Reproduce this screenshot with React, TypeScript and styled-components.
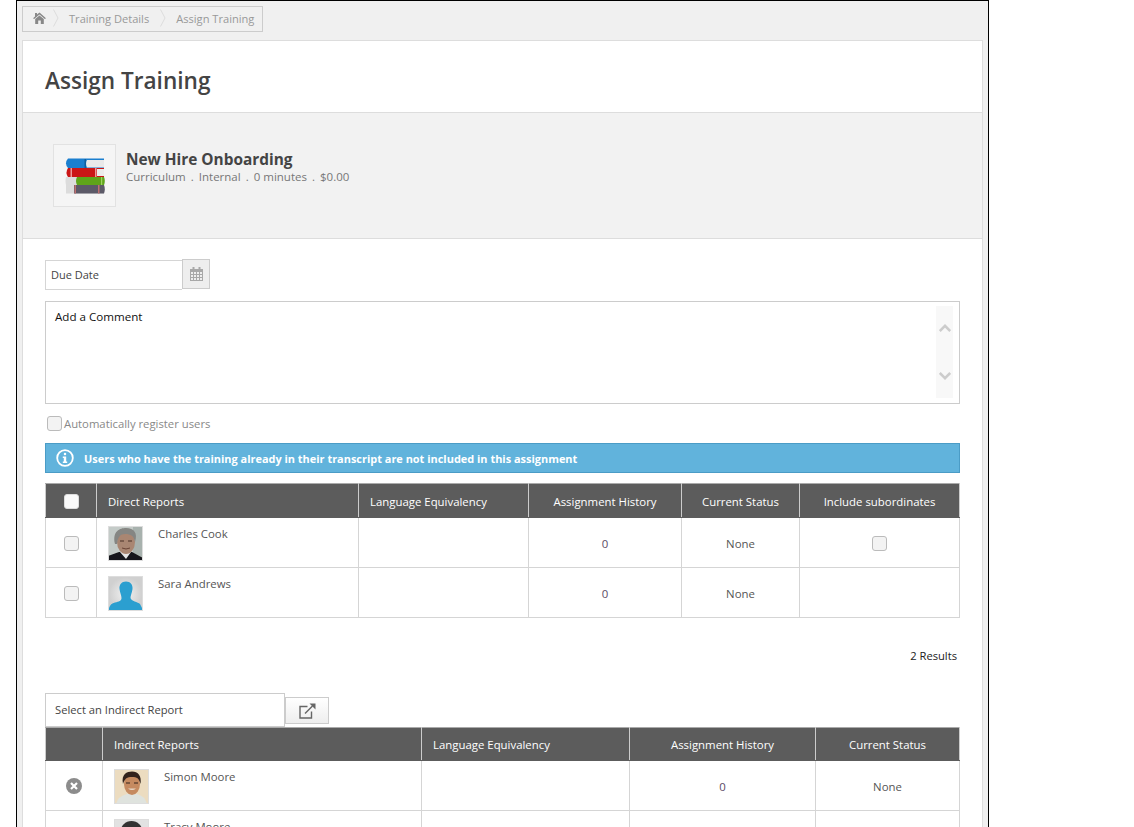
import React from 'react'
import styled, { createGlobalStyle } from 'styled-components'

const GlobalStyle = createGlobalStyle`
  html, body {
    margin: 0;
    padding: 0;
    height: 827px;
    overflow: hidden;
    background: #fff;
    font-family: "Open Sans", "Liberation Sans", sans-serif;
    font-size: 12px;
    color: #555;
  }
`

const Frame = styled.div`
  width: 973px;
  margin-left: 16px;
  box-sizing: border-box;
  height: 827px;
  overflow: hidden;
  border: 1px solid #000;
  border-bottom: 0;
  background: #f0f0f0;
  padding: 5px 5px 0 5px;
`

const Breadcrumbs = styled.div`
  display: inline-flex;
  align-items: center;
  height: 26px;
  box-sizing: border-box;
  border: 1px solid #ccc;
  padding: 0 8px 2px 10px;
  color: #999;
  font-size: 11.1px;
  vertical-align: top;
`

const Crumb = styled.span`
  margin-left: 10px;
`

const HomeWrap = styled.span`
  display: flex;
  margin-right: -4px;
`

const ChevronMark = styled.svg`
  margin-left: 11px;
`

const Card = styled.div`
  margin-top: 8px;
  background: #fff;
  border: 1px solid #ddd;
  width: 961px;
  box-sizing: border-box;
  height: 900px;
`

const TitleBar = styled.div`
  height: 72px;
  box-sizing: border-box;
  padding: 23px 0 0 22px;
  border-bottom: 1px solid #ddd;
`

const Title = styled.h1`
  margin: 0;
  font-size: 22.6px;
  line-height: 34px;
  font-weight: 600;
  color: #444;
`

const Summary = styled.div`
  height: 126px;
  box-sizing: border-box;
  background: #f2f2f2;
  border-bottom: 1px solid #ddd;
  padding: 31px 0 0 30px;
  display: flex;
  gap: 10px;
`

const Thumb = styled.div`
  width: 63px;
  height: 63px;
  box-sizing: border-box;
  background: #f5f5f5;
  border: 1px solid #e2e2e2;
  display: flex;
  align-items: center;
  justify-content: center;
`

const SummaryText = styled.div`
  padding-top: 6px;
`

const CourseName = styled.div`
  font-size: 15.4px;
  line-height: 19px;
  font-weight: 700;
  color: #444;
`

const Meta = styled.div`
  display: flex;
  gap: 5px;
  font-size: 11.5px;
  line-height: 15px;
  color: #777;
`

const Body = styled.div`
  padding: 21px 22px 0 22px;
`

const DateRow = styled.div`
  display: flex;
  align-items: flex-start;
`

const DateInput = styled.div`
  width: 137px;
  height: 30px;
  box-sizing: border-box;
  border: 1px solid #d5d5d5;
  border-right: 0;
  padding-left: 5px;
  line-height: 28px;
  font-size: 11px;
  color: #444;
`

const DateButton = styled.div`
  width: 28px;
  height: 30px;
  margin-top: -1px;
  box-sizing: border-box;
  border: 1px solid #ccc;
  background: #eee;
  display: flex;
  align-items: center;
  justify-content: center;
`

const Comment = styled.div`
  position: relative;
  margin-top: 11px;
  height: 103px;
  box-sizing: border-box;
  border: 1px solid #ccc;
  padding: 7px 9px;
  font-size: 11.6px;
  line-height: 16px;
  color: #111;
`

const ScrollTrack = styled.div`
  position: absolute;
  top: 4px;
  right: 6px;
  bottom: 5px;
  width: 17px;
  background: #f8f8f8;
  display: flex;
  flex-direction: column;
  justify-content: space-between;
  align-items: center;
  padding: 18px 0 18px;
  box-sizing: border-box;
`

const AutoRow = styled.div`
  display: flex;
  align-items: center;
  gap: 2px;
  margin: 11px 0 12px 2px;
  height: 16px;
  font-size: 11.3px;
  color: #888;
`

const Check = styled.span<{ $white?: boolean }>`
  display: block;
  width: 15px;
  height: 15px;
  box-sizing: border-box;
  border: 1px solid ${(p) => (p.$white ? '#ddd' : '#bbb')};
  border-radius: 3px;
  background: ${(p) => (p.$white ? '#fafafa' : '#f3f3f3')};
`

const Notice = styled.div`
  height: 30px;
  box-sizing: border-box;
  background: #61b3dc;
  border: 1px solid #4b9cc6;
  display: flex;
  align-items: center;
  gap: 10px;
  padding: 0 0 0 10px;
  color: #fff;
  font-size: 10.95px;
  font-weight: 700;
`

const NoticeText = styled.span`
  padding-top: 1px;
`

const Table = styled.table<{ $top: number }>`
  width: 914px;
  margin-top: ${(p) => p.$top}px;
  border-collapse: collapse;
  table-layout: fixed;
  font-size: 11.4px;
`

const Head = styled.th<{ $left?: boolean; $tall?: boolean }>`
  height: ${(p) => (p.$tall ? 34 : 33)}px;
  padding: ${(p) => (p.$left ? '1px 11px 0' : '1px 0 0')};
  box-sizing: border-box;
  background: #5c5c5c;
  color: #fff;
  font-weight: 400;
  text-align: ${(p) => (p.$left ? 'left' : 'center')};
  border: 1px solid #ccc;
  border-top-color: #aaa;
  border-bottom-color: #5c5c5c;
`

const Cell = styled.td`
  height: 50px;
  padding: 1px 0 0;
  box-sizing: border-box;
  text-align: center;
  color: #555;
  border: 1px solid #d5d5d5;
`

const Count = styled.span`
  color: #5c4a66;
`

const CenterBox = styled.div`
  display: flex;
  justify-content: center;
`

const Person = styled.div`
  display: flex;
  align-items: flex-start;
  height: 48px;
  box-sizing: border-box;
  padding: 7px 0 0 11px;
  text-align: left;
`

const Avatar = styled.div`
  width: 35px;
  height: 35px;
  flex: none;
  box-sizing: border-box;
  border: 1px solid #ddd;
  overflow: hidden;
  margin-right: 15px;
  svg {
    display: block;
  }
`

const PersonName = styled.span`
  color: #555;
  line-height: 16px;
`

const Results = styled.div`
  margin-top: 30px;
  height: 16px;
  line-height: 16px;
  text-align: right;
  padding-right: 3px;
  font-size: 11.2px;
  color: #222;
`

const PickerRow = styled.div`
  display: flex;
  align-items: center;
  margin-top: 29px;
  height: 34px;
`

const PickerInput = styled.div`
  width: 240px;
  height: 34px;
  box-sizing: border-box;
  border: 1px solid #ccc;
  padding-left: 9px;
  line-height: 32px;
  font-size: 11.2px;
  color: #444;
`

const PickerButton = styled.div`
  width: 44px;
  height: 27px;
  box-sizing: border-box;
  border: 1px solid #ccc;
  background: linear-gradient(#fff, #eee);
  margin-top: 1px;
  display: flex;
  align-items: center;
  justify-content: center;
`

const Remove = styled.div`
  display: flex;
  justify-content: center;
`

const HomeIcon = () => (
  <svg width="13" height="12" viewBox="0 0 13 12">
    <path d="M6.5 0.5 L13 6.2 L11.8 7 L6.5 2.6 L1.2 7 L0 6.2 L2 4.4 V1 H4 V2.6 Z" fill="#888" />
    <path d="M2.2 7 L6.5 3.5 L10.8 7 V12 H7.8 V8.4 H5.2 V12 H2.2 Z" fill="#888" />
  </svg>
)

const Chevron = () => (
  <ChevronMark width="6" height="18" viewBox="0 0 6 18">
    <path d="M0.5 0.5 L5 9 L0.5 17.5" fill="none" stroke="#dcdcdc" />
  </ChevronMark>
)

const Books = () => (
  <svg width="40" height="36" viewBox="0 0 40 36">
    <path d="M3 0.5 H39 V10 H3 Q-1 5 3 0.5 Z" fill="#1b7fcf" />
    <path d="M22 2 H39 V9.5 H22 Q20 5.5 22 2 Z" fill="#e9e9e9" />
    <rect x="19.5" y="1" width="1.5" height="9" fill="#0f5f9f" />
    <path d="M3 10 H39 V19 H3 Q0 14.5 3 10 Z" fill="#cb1616" />
    <path d="M32 11 H39 V18 H32 Z" fill="#ececec" />
    <rect x="5.5" y="10" width="1.5" height="9" fill="#eb9a9a" />
    <rect x="30" y="10" width="1.5" height="9" fill="#eb9a9a" />
    <path d="M1 19 H39 Q40.5 23 39 27 H1 Q0 23 1 19 Z" fill="#dcdcdc" />
    <path d="M12 19 H39 Q40.5 23 39 27 H12 Q10 23 12 19 Z" fill="#5fa51a" />
    <rect x="36" y="19" width="1.2" height="8" fill="#9fd25f" />
    <path d="M1 27 H39 Q40.5 31 39 35.5 H1 Z" fill="#dcdcdc" />
    <path d="M9 27 H39 Q40.5 31 39 35.5 H9 Z" fill="#5c5a68" />
    <rect x="9.5" y="27" width="1.5" height="8.5" fill="#c07070" />
    <rect x="33" y="27" width="1.5" height="8.5" fill="#c07070" />
  </svg>
)

const CalendarIcon = () => (
  <svg width="13" height="14" viewBox="0 0 13 14">
    <path
      d="M0 2 H13 V14 H0 Z M1 5 V7 H3 V5 Z M4 5 V7 H6 V5 Z M7 5 V7 H9 V5 Z M10 5 V7 H12 V5 Z M1 8 V10 H3 V8 Z M4 8 V10 H6 V8 Z M7 8 V10 H9 V8 Z M10 8 V10 H12 V8 Z M1 11 V13 H3 V11 Z M4 11 V13 H6 V11 Z M7 11 V13 H9 V11 Z M10 11 V13 H12 V11 Z"
      fill="#a8a8a8"
      fillRule="evenodd"
    />
    <rect x="2.5" y="0" width="2" height="3.5" fill="#a8a8a8" />
    <rect x="8.5" y="0" width="2" height="3.5" fill="#a8a8a8" />
  </svg>
)

const ScrollArrow = ({ up }: { up?: boolean }) => (
  <svg width="12" height="8" viewBox="0 0 12 8">
    <path d={up ? 'M0.8 7 L6 1.8 L11.2 7' : 'M0.8 1 L6 6.2 L11.2 1'} fill="none" stroke="#ccc" strokeWidth="2.5" />
  </svg>
)

const InfoIcon = () => (
  <svg width="18" height="18" viewBox="0 0 18 18">
    <circle cx="9" cy="9" r="7.8" fill="none" stroke="#fff" strokeWidth="1.8" />
    <rect x="7.8" y="3.8" width="2.4" height="2.4" rx="1" fill="#fff" />
    <path d="M6.8 7.5 H10.2 V12.5 H11.2 V14 H6.8 V12.5 H7.8 V9 H6.8 Z" fill="#fff" />
  </svg>
)

const PopoutIcon = () => (
  <svg width="17" height="16" viewBox="0 0 17 16">
    <path d="M8.5 3.5 H1 V15 H12.5 V8.5" fill="none" stroke="#666" strokeWidth="1.4" />
    <path d="M6 10.5 L13.5 3" fill="none" stroke="#666" strokeWidth="1.5" />
    <path d="M10.5 0.5 H16.5 V6.5 Z" fill="#666" />
  </svg>
)

const RemoveIcon = () => (
  <svg width="16" height="16" viewBox="0 0 16 16">
    <circle cx="8" cy="8" r="8" fill="#8c8c8c" />
    <path d="M5 5 L11 11 M11 5 L5 11" stroke="#fff" strokeWidth="2.2" />
  </svg>
)

const Soft = () => (
  <defs>
    <filter id="soft" x="-10%" y="-10%" width="120%" height="120%">
      <feGaussianBlur stdDeviation="0.7" />
    </filter>
  </defs>
)

const CharlesPhoto = () => (
  <svg width="33" height="33" viewBox="0 0 33 33">
    <Soft />
    <rect width="33" height="33" fill="#c4cbc8" />
    <rect x="24" width="9" height="33" fill="#a8b2ae" />
    <g filter="url(#soft)">
      <path d="M-1 34 V29 L10 25 H23 L34 31 V34 Z" fill="#15161a" />
      <path d="M11 25 L17 32 L22 25 Z" fill="#e6e6e6" />
      <ellipse cx="17" cy="15" rx="9" ry="12" fill="#a98672" />
      <path d="M6 17 C3 4 11 1 17 1 C25 1 29 6 26 15 C25 9 22 7 16 7 C11 7 9 10 8 17 Z" fill="#858683" />
      <path d="M11 14 H15 M19 14 H23" stroke="#4c3228" strokeWidth="1.2" />
      <path d="M13 21 Q17 23 21 21" stroke="#6a4436" strokeWidth="1" fill="none" />
    </g>
  </svg>
)

const SilhouettePhoto = () => (
  <svg width="33" height="33" viewBox="0 0 33 33">
    <defs>
      <radialGradient id="silhouetteBg">
        <stop offset="0" stopColor="#f2f2f2" />
        <stop offset="1" stopColor="#d0d0d0" />
      </radialGradient>
    </defs>
    <rect width="33" height="33" fill="url(#silhouetteBg)" />
    <path
      d="M17 4.5 C21.5 4.5 24 8 23.5 12 C23 16 21.5 18 21.5 21 C22 24 29 25 31 27 L33 31 V33 H0 V31 C1 28 3 26 6 25.5 C10 24.5 12.5 24 12.5 21 C12.5 18 11 16 10.5 12 C10 8 12.5 4.5 17 4.5 Z"
      fill="#2b9fd0"
    />
  </svg>
)

const SimonPhoto = () => (
  <svg width="33" height="33" viewBox="0 0 33 33">
    <Soft />
    <rect width="33" height="33" fill="#ecdcc0" />
    <g filter="url(#soft)">
      <path d="M1 34 Q3 26 12 24 H22 Q30 26 32 34 Z" fill="#dfe3de" />
      <ellipse cx="17" cy="14" rx="8" ry="11" fill="#c58a60" />
      <path d="M8 14 C6 4 12 1.5 17 1.5 C23 1.5 27 6 25.5 14 C24 8 22 7 17 7 C12 7 10 8 8 14 Z" fill="#33231c" />
      <path d="M11 13 H15 M19 13 H23" stroke="#33231c" strokeWidth="1.2" />
      <path d="M13 18.5 Q17 21.5 21 18.5 Z" fill="#e8d8c8" />
    </g>
  </svg>
)

const TracyPhoto = () => (
  <svg width="33" height="33" viewBox="0 0 33 33">
    <rect width="33" height="33" fill="#e2e2e2" />
    <ellipse cx="16.5" cy="12" rx="11" ry="11" fill="#333" />
  </svg>
)

const Direct = [
  { name: 'Charles Cook', photo: <CharlesPhoto />, sub: true },
  { name: 'Sara Andrews', photo: <SilhouettePhoto />, sub: false },
]

const Indirect = [
  { name: 'Simon Moore', photo: <SimonPhoto /> },
  { name: 'Tracy Moore', photo: <TracyPhoto /> },
]

const App = () => {
  return (
    <>
      <GlobalStyle />
      <Frame>
        <Breadcrumbs>
          <HomeWrap>
            <HomeIcon />
          </HomeWrap>
          <Chevron />
          <Crumb>Training Details</Crumb>
          <Chevron />
          <Crumb>Assign Training</Crumb>
        </Breadcrumbs>
        <Card>
          <TitleBar>
            <Title>Assign Training</Title>
          </TitleBar>
          <Summary>
            <Thumb>
              <Books />
            </Thumb>
            <SummaryText>
              <CourseName>New Hire Onboarding</CourseName>
              <Meta>
                <span>Curriculum</span>
                <span>.</span>
                <span>Internal</span>
                <span>.</span>
                <span>0 minutes</span>
                <span>.</span>
                <span>$0.00</span>
              </Meta>
            </SummaryText>
          </Summary>
          <Body>
            <DateRow>
              <DateInput>Due Date</DateInput>
              <DateButton>
                <CalendarIcon />
              </DateButton>
            </DateRow>
            <Comment>
              Add a Comment
              <ScrollTrack>
                <ScrollArrow up />
                <ScrollArrow />
              </ScrollTrack>
            </Comment>
            <AutoRow>
              <Check />
              Automatically register users
            </AutoRow>
            <Notice>
              <InfoIcon />
              <NoticeText>
                Users who have the training already in their transcript are not included in this assignment
              </NoticeText>
            </Notice>
            <Table $top={10}>
              <colgroup>
                <col width="51" />
                <col width="262" />
                <col width="170" />
                <col width="153" />
                <col width="118" />
                <col width="160" />
              </colgroup>
              <thead>
                <tr>
                  <Head $tall>
                    <CenterBox>
                      <Check $white />
                    </CenterBox>
                  </Head>
                  <Head $left>Direct Reports</Head>
                  <Head $left>Language Equivalency</Head>
                  <Head>Assignment History</Head>
                  <Head>Current Status</Head>
                  <Head>Include subordinates</Head>
                </tr>
              </thead>
              <tbody>
                {Direct.map((row) => (
                  <tr key={row.name}>
                    <Cell>
                      <CenterBox>
                        <Check />
                      </CenterBox>
                    </Cell>
                    <Cell>
                      <Person>
                        <Avatar>{row.photo}</Avatar>
                        <PersonName>{row.name}</PersonName>
                      </Person>
                    </Cell>
                    <Cell />
                    <Cell>
                      <Count>0</Count>
                    </Cell>
                    <Cell>None</Cell>
                    <Cell>
                      {row.sub && (
                        <CenterBox>
                          <Check />
                        </CenterBox>
                      )}
                    </Cell>
                  </tr>
                ))}
              </tbody>
            </Table>
            <Results>2 Results</Results>
            <PickerRow>
              <PickerInput>Select an Indirect Report</PickerInput>
              <PickerButton>
                <PopoutIcon />
              </PickerButton>
            </PickerRow>
            <Table $top={0}>
              <colgroup>
                <col width="57" />
                <col width="319" />
                <col width="208" />
                <col width="186" />
                <col width="144" />
              </colgroup>
              <thead>
                <tr>
                  <Head />
                  <Head $left>Indirect Reports</Head>
                  <Head $left>Language Equivalency</Head>
                  <Head>Assignment History</Head>
                  <Head>Current Status</Head>
                </tr>
              </thead>
              <tbody>
                {Indirect.map((row) => (
                  <tr key={row.name}>
                    <Cell>
                      <Remove>
                        <RemoveIcon />
                      </Remove>
                    </Cell>
                    <Cell>
                      <Person>
                        <Avatar>{row.photo}</Avatar>
                        <PersonName>{row.name}</PersonName>
                      </Person>
                    </Cell>
                    <Cell />
                    <Cell>
                      <Count>0</Count>
                    </Cell>
                    <Cell>None</Cell>
                  </tr>
                ))}
              </tbody>
            </Table>
          </Body>
        </Card>
      </Frame>
    </>
  )
}

export default App
